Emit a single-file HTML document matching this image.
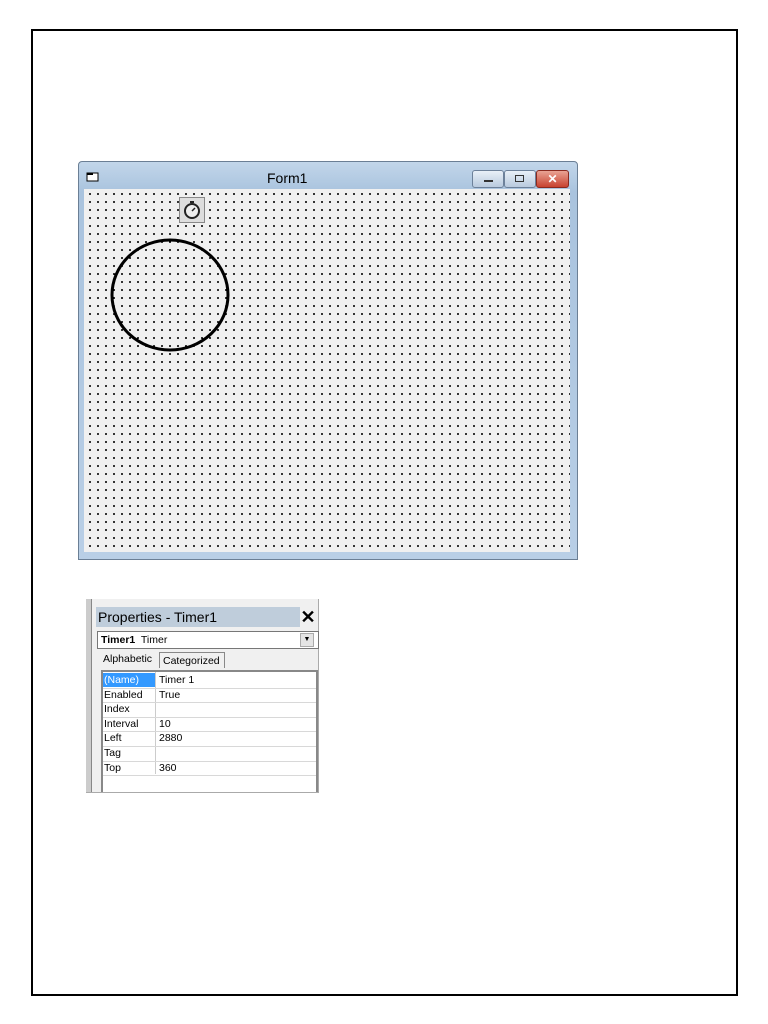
<!DOCTYPE html><html><head><style>
body{margin:0;width:768px;height:1024px;background:#fff;position:relative;font-family:"Liberation Sans",sans-serif;overflow:hidden}
.a{position:absolute}
.grid{background-color:#f0f0f0;background-image:radial-gradient(circle,#000 0.8px,transparent 1.1px);background-size:8px 8px;background-position:2px 1px}
.row{position:absolute;left:0;width:100%;height:14.6px;border-bottom:1px solid #d8d8d8;font-size:10.5px;line-height:14px}
.row span{position:absolute}
</style></head><body>
<div class="a" style="left:31px;top:29px;width:703px;height:963px;border:2px solid #000"></div>
<div class="a" style="left:78px;top:161px;width:498px;height:397px;border:1px solid #6b7f95;background:linear-gradient(#c2d6ea,#a9c3de 30px,#b9cfe6);border-radius:4px 4px 0 0"></div>
<div class="a" style="left:86px;top:171px;width:14px;height:11px;font-size:10px">
<svg width="14" height="11"><rect x="1" y="2" width="11" height="8" fill="#fff" stroke="#000"/><rect x="1" y="2" width="6" height="2" fill="#000"/></svg></div>
<div class="a" style="left:267px;top:170px;font-size:14px;color:#000">Form1</div>
<div class="a" style="left:472px;top:170px;width:30px;height:16px;border:1px solid #6d819a;border-radius:3px;background:linear-gradient(#e8f0f8,#b9cade)"><div class="a" style="left:11px;top:9px;width:9px;height:2px;background:#333"></div></div>
<div class="a" style="left:504px;top:170px;width:30px;height:16px;border:1px solid #6d819a;border-radius:3px;background:linear-gradient(#e8f0f8,#b9cade)"><div class="a" style="left:10px;top:4px;width:7px;height:5px;border:1.5px solid #333"></div></div>
<div class="a" style="left:536px;top:170px;width:31px;height:16px;border:1px solid #8a2a1f;border-radius:3px;background:linear-gradient(#e9a394,#c8422f);color:#fff;font-size:12px;font-weight:bold;text-align:center;line-height:16px">✕</div>
<div class="a grid" style="left:84px;top:189px;width:486px;height:363px"></div>
<div class="a" style="left:179px;top:197px;width:24px;height:24px;border:1px solid #888;background:#ddd">
<svg width="24" height="24"><circle cx="12" cy="13" r="7" fill="#eee" stroke="#222" stroke-width="2"/><rect x="10" y="3" width="4" height="2" fill="#222"/><line x1="12" y1="13" x2="15" y2="10" stroke="#222" stroke-width="1.5"/></svg></div>
<svg class="a" style="left:100px;top:230px" width="140" height="130"><ellipse cx="70" cy="65" rx="58" ry="55" fill="none" stroke="#000" stroke-width="3"/></svg>
<div class="a" style="left:86px;top:599px;width:232px;height:193px;background:#f0f0f0;border-right:1px solid #aaa;border-bottom:1px solid #aaa"></div>
<div class="a" style="left:86px;top:599px;width:5px;height:193px;background:#ccc;border-right:1px solid #888"></div>
<div class="a" style="left:96px;top:607px;width:202px;height:20px;background:#bfcddb;font-size:14px;line-height:20px;padding-left:2px">Properties - Timer1</div>
<div class="a" style="left:298px;top:607px;width:20px;height:20px;font-size:18px;line-height:20px;text-align:center;font-weight:bold">✕</div>
<div class="a" style="left:97px;top:631px;width:217px;height:16px;background:#fff;border:1px solid #777;font-size:10.5px;line-height:16px;padding-left:3px"><b>Timer1</b>&nbsp; Timer</div>
<div class="a" style="left:300px;top:633px;width:12px;height:12px;background:#e4e4e4;border:1px solid #aaa;font-size:7px;text-align:center;line-height:12px">▼</div>
<div class="a" style="left:100px;top:651px;font-size:10.5px;line-height:16px;padding:0 3px">Alphabetic</div>
<div class="a" style="left:159px;top:652px;width:66px;height:16px;border:1px solid #888;border-bottom:none;font-size:10.5px;line-height:17px;padding-left:3px;box-sizing:border-box">Categorized</div>
<div class="a" style="left:101px;top:670px;width:213px;height:120px;background:#fff;border:2px solid #888;border-bottom:none">
<div class="a" style="left:52px;top:0;width:1px;height:102px;background:#ccc"></div>
<div class="row" style="top:1px"><span style="left:0;width:52px;background:#3399ff;color:#fff;padding-left:1px;box-sizing:border-box">(Name)</span><span style="left:56px">Timer 1</span></div>
<div class="row" style="top:15.6px"><span style="left:1px">Enabled</span><span style="left:56px">True</span></div>
<div class="row" style="top:30.2px"><span style="left:1px">Index</span></div>
<div class="row" style="top:44.8px"><span style="left:1px">Interval</span><span style="left:56px">10</span></div>
<div class="row" style="top:59.4px"><span style="left:1px">Left</span><span style="left:56px">2880</span></div>
<div class="row" style="top:74px"><span style="left:1px">Tag</span></div>
<div class="row" style="top:88.6px"><span style="left:1px">Top</span><span style="left:56px">360</span></div>
</div>
</body></html>
